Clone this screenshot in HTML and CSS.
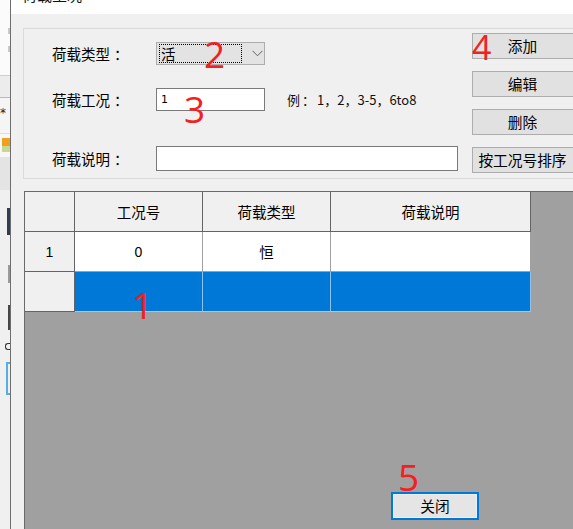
FILE: index.html
```html
<!DOCTYPE html>
<html lang="zh">
<head>
<meta charset="utf-8">
<title>荷载工况</title>
<link rel="stylesheet" href="styles.css">
</head>
<body>
<div class="screen">
  <div class="behind">
    <div class="bk bk1"><span class="tick t1"></span><span class="tick t2"></span></div>
    <div class="bk bk2"></div>
    <div class="bk bk3"><span class="star">*</span></div>
    <div class="bk bk4"><span class="ico"></span></div>
    <div class="bk bk5"></div>
    <div class="bk bk6">
      <span class="mark m1"></span>
      <span class="mark m2"></span>
      <span class="mark m3"></span>
      <span class="mark m4"></span>
      <span class="mark m5"></span>
    </div>
  </div>
  <div class="dialog">
    <div class="titlebar"><span class="title">荷载工况</span></div>
    <div class="body">
      <div class="group">
        <div class="form">
          <div class="row r1">
            <span class="label">荷载类型<span class="colon">：</span></span>
            <div class="combo">
              <span class="focus">活</span>
              <svg class="chev" width="11" height="7" viewBox="0 0 11 7"><path d="M0.5 0.8 L5.5 5.8 L10.5 0.8" fill="none" stroke="#606060" stroke-width="1"/></svg>
            </div>
          </div>
          <div class="row r2">
            <span class="label">荷载工况<span class="colon">：</span></span>
            <div class="input small"><span class="val">1</span></div>
            <span class="hint">例<span class="colon hc">：</span>1，2，3-5，6to8</span>
          </div>
          <div class="row r3">
            <span class="label">荷载说明<span class="colon">：</span></span>
            <div class="input wide"></div>
          </div>
        </div>
        <div class="buttons">
          <div class="btn">添加</div>
          <div class="btn">编辑</div>
          <div class="btn">删除</div>
          <div class="btn">按工况号排序</div>
        </div>
      </div>
      <div class="gridview">
        <div class="table">
          <div class="c hd corner"></div>
          <div class="c hd">工况号</div>
          <div class="c hd">荷载类型</div>
          <div class="c hd">荷载说明</div>
          <div class="c rh">1</div>
          <div class="c dt num">0</div>
          <div class="c dt">恒</div>
          <div class="c dt"></div>
          <div class="c rh"></div>
          <div class="c sel"></div>
          <div class="c sel"></div>
          <div class="c sel"></div>
        </div>
        <div class="close">关闭</div>
      </div>
    </div>
  </div>
  <span class="anno a2">2</span>
  <span class="anno a3">3</span>
  <span class="anno a4">4</span>
  <span class="anno a1">1</span>
  <span class="anno a5">5</span>
</div>
</body>
</html>
```
FILE: styles.css
```css
* { box-sizing: border-box; }
html, body { margin: 0; padding: 0; background: #f0f0f0; }
body { font-family: "Noto Sans CJK SC", "Noto Sans", sans-serif; color: #000; }

.screen {
  position: relative;
  width: 573px;
  height: 529px;
  overflow: hidden;
  display: flex;
}

/* window behind, left strip */
.behind { width: 10px; flex-shrink: 0; display: flex; flex-direction: column; }
.bk { position: relative; width: 10px; }
.bk1 { height: 75px; background: #fbfbfb; display: flex; flex-direction: column; align-items: flex-end; }
.tick { display: block; width: 2px; background: #c9c9c9; }
.t1 { height: 6px; margin-top: 28px; }
.t2 { height: 6px; margin-top: 12px; }
.bk2 { height: 22px; background: #ececec; border-top: 1px solid #d0d0d0; }
.bk3 { height: 36px; background: #f5f5f5; border-top: 1px solid #b8b8b8; }
.star { display: block; font-family: "DejaVu Sans", sans-serif; font-size: 12px; line-height: 12px; margin-top: 9px; margin-left: 0; color: #222; }
.bk4 { height: 24px; background: #f7f7f7; border-top: 1px solid #dcdcdc; }
.ico { display: block; width: 8px; height: 14px; margin: 4px 0 0 2px; background: linear-gradient(#f0a020 0 55%, #c8d890 55% 100%); }
.bk5 { height: 33px; background: #e4e4e4; }
.bk6 { flex: 1; background: #f0f0f0; display: flex; flex-direction: column; align-items: flex-end; }
.mark { display: block; width: 3px; }
.m1 { height: 27px; margin-top: 18px; background: #2e3e4c; }
.m2 { height: 18px; margin-top: 30px; background: #9a9a9a; width: 2px; }
.m3 { height: 25px; margin-top: 22px; background: #474747; width: 2px; }
.m4 { height: 7px; margin-top: 13px; width: 5px; border: 1.5px solid #333; border-right: none; border-radius: 3px 0 0 3px; }
.m5 { height: 33px; margin-top: 12px; width: 4px; border: 2px solid #55aee6; border-right: none; }

/* dialog */
.dialog {
  flex: 1;
  min-width: 0;
  border-left: 1px solid #6e6e6e;
  background: #f0f0f0;
  display: flex;
  flex-direction: column;
  overflow: hidden;
}
.titlebar { height: 14px; background: #ffffff; overflow: hidden; padding-left: 11px; }
.title { display: block; font-size: 15px; line-height: 15px; margin-top: -13px; color: #111; }

.body { flex: 1; display: flex; flex-direction: column; padding: 14px 0 0 12px; min-height: 0; }

.group {
  width: 620px;
  height: 151px;
  flex-shrink: 0;
  border: 1px solid #dadada;
  display: flex;
  align-items: flex-start;
}
.form { width: 448px; padding-left: 28px; flex-shrink: 0; }
.row { display: flex; align-items: center; }
.r1 { margin-top: 13px; height: 23px; }
.r2 { margin-top: 23px; height: 23px; }
.r3 { margin-top: 35px; height: 25px; }
.label { width: 104px; font-size: 14.5px; line-height: 18px; white-space: nowrap; }
.colon { padding-left: 4px; }
.hc { padding-left: 2px; padding-right: 2px; }

.combo {
  width: 109px;
  height: 23px;
  background: #e3e3e3;
  border: 1px solid #adadad;
  display: flex;
  align-items: center;
  padding: 0 0 0 2px;
}
.focus {
  width: 83px;
  height: 19px;
  border: 1px dotted #000;
  font-size: 14.5px;
  line-height: 17px;
  padding-left: 1px;
}
.chev { margin-left: 10px; }

.input { background: #fff; border: 1px solid #7a7a7a; height: 100%; }
.small { width: 109px; display: flex; align-items: center; padding-left: 4px; }
.val { font-family: "DejaVu Sans", sans-serif; font-size: 11px; line-height: 12px; }
.wide { width: 302px; }
.hint { margin-left: 22px; font-size: 13px; line-height: 16px; white-space: nowrap; color: #111; }

.buttons { display: flex; flex-direction: column; gap: 12px; margin-top: 4px; }
.btn {
  width: 104px;
  height: 26px;
  background: #e1e1e1;
  border: 1px solid #adadad;
  font-size: 14.7px;
  line-height: 24px;
  text-align: center;
  white-space: nowrap;
  padding-right: 3px;
}

/* grid */
.gridview {
  position: relative;
  flex: 1;
  margin: 12px 0 0 1px;
  border-top: 1px solid #6a6a6a;
  border-left: 1px solid #6a6a6a;
  background: #a0a0a0;
}
.table {
  display: grid;
  grid-template-columns: 50px 128px 128px 200px;
  grid-auto-rows: 40px;
  width: 506px;
}
.c {
  display: flex;
  align-items: center;
  justify-content: center;
  font-size: 14.5px;
  line-height: 18px;
  border-right: 1px solid #a0a0a0;
  border-bottom: 1px solid #a0a0a0;
}
.hd { background: #f0f0f0; border-right-color: #646464; border-bottom-color: #646464; }
.rh { background: #f0f0f0; border-right-color: #646464; border-bottom-color: #646464; font-family: "Liberation Sans", sans-serif; font-size: 14px; }
.dt { background: #fff; }
.num { font-family: "Liberation Sans", sans-serif; font-size: 14px; }
.sel { background: #0078d7; border-right-color: #8cc2ec; border-bottom-color: #9ccbee; }

.close {
  position: absolute;
  left: 366px;
  top: 300px;
  width: 88px;
  height: 28px;
  background: #e5e5e5;
  border: 1px solid #0078d7;
  box-shadow: inset 0 0 0 1px #0078d7, inset 0 0 0 2px #e8f1fa;
  font-size: 14.7px;
  line-height: 26px;
  text-align: center;
}

/* red annotations */
.anno {
  position: absolute;
  font-family: "Open Sans", sans-serif;
  font-size: 37px;
  line-height: 1;
  color: #f42020;
}
.a2 { left: 204px; top: 35px; }
.a3 { left: 184px; top: 90px; }
.a4 { left: 472px; top: 30px; font-size: 34px; }
.a1 { left: 132px; top: 286px; }
.a5 { left: 398px; top: 458px; }
```
